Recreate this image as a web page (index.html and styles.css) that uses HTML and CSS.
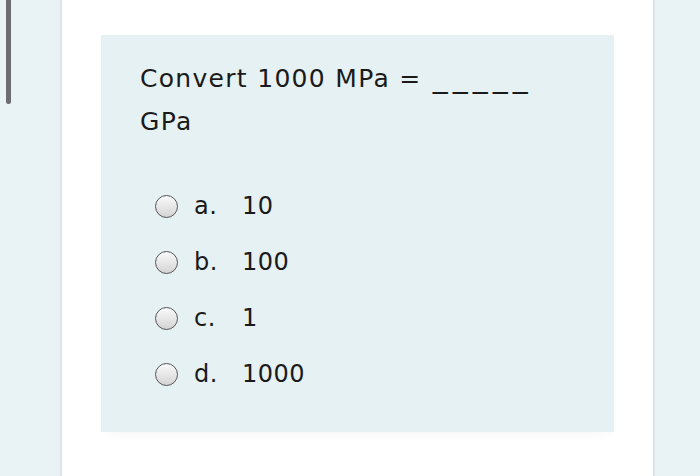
FILE: index.html
```html
<!DOCTYPE html>
<html>
<head>
<meta charset="utf-8">
<link rel="stylesheet" href="styles.css">
</head>
<body>
<div class="page">
  <aside class="side-left"><div class="scrollbar"></div></aside>
  <main class="card">
    <section class="question">
      <p class="qtext">Convert 1000 MPa = <span class="blank">_____</span><br>GPa</p>
      <ul class="options">
        <li class="option"><span class="radio"></span><span class="letter">a.</span><span class="value">10</span></li>
        <li class="option"><span class="radio"></span><span class="letter">b.</span><span class="value">100</span></li>
        <li class="option"><span class="radio"></span><span class="letter">c.</span><span class="value">1</span></li>
        <li class="option"><span class="radio"></span><span class="letter">d.</span><span class="value">1000</span></li>
      </ul>
    </section>
  </main>
  <aside class="side-right"></aside>
</div>
</body>
</html>
```
FILE: styles.css
```css
html, body {
  margin: 0;
  padding: 0;
  height: 100%;
  overflow: hidden;
}
body {
  font-family: "DejaVu Sans", "Open Sans", sans-serif;
  color: #1a1a1a;
  background: #fff;
}
.page {
  display: flex;
  height: 476px;
}
.side-left {
  width: 62px;
  background: #e9f2f5;
  border-right: 2px solid #dde5ec;
  padding-left: 6px;
  box-sizing: border-box;
}
.scrollbar {
  width: 5px;
  height: 104px;
  background: #6c6c73;
  border-radius: 0 0 3px 3px;
}
.card {
  flex: 1;
  background: #fff;
  padding-top: 35px;
  padding-left: 39px;
  box-sizing: border-box;
}
.side-right {
  width: 45px;
  background: #e9f3f6;
  border-left: 2px solid #dde3ec;
}
.question {
  width: 513px;
  height: 397px;
  background: #e6f1f4;
  box-sizing: border-box;
  padding: 22px 0 0 39px;
  box-shadow: 0 8px 10px -6px rgba(0,0,0,0.04);
}
.qtext {
  margin: 0;
  font-size: 25px;
  line-height: 43px;
  letter-spacing: 1.3px;
}
.blank {
  font-size: 30px;
  line-height: 0;
  letter-spacing: 5px;
  margin-left: 2px;
}
.options {
  list-style: none;
  margin: 35px 0 0 15px;
  padding: 0;
}
.option {
  display: flex;
  align-items: center;
  height: 56px;
  font-size: 24px;
  letter-spacing: 0.5px;
}
.radio {
  width: 21px;
  height: 21px;
  border: 1.5px solid #555;
  border-radius: 50%;
  background: linear-gradient(#fafafa, #d4d4d4);
  margin-right: 16px;
  flex: none;
}
.letter {
  width: 48px;
}
```
